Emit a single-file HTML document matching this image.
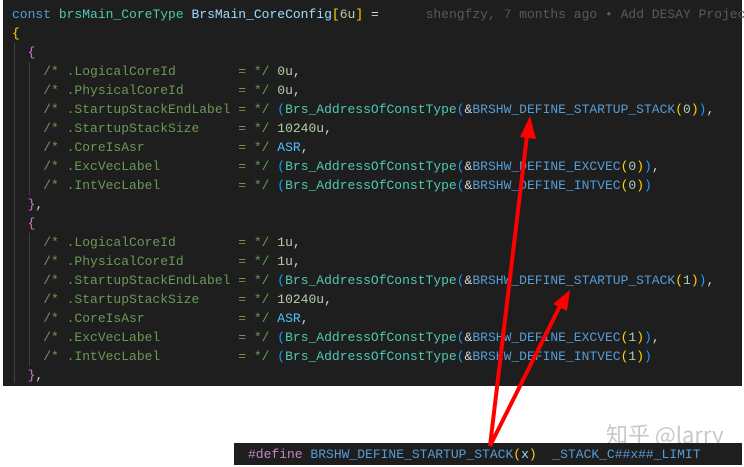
<!DOCTYPE html>
<html><head><meta charset="utf-8"><style>
body{margin:0;width:744px;height:467px;background:#fff;position:relative;overflow:hidden}
#ed{position:absolute;left:3px;top:0;width:739px;height:386px;background:#1e1e1e}
pre{margin:0;font-family:"Liberation Mono",monospace;font-size:13px;line-height:19px;color:#d4d4d4;white-space:pre}
#code{position:absolute;left:9px;top:5px}
.k{color:#569cd6}.t{color:#4ec9b0}.v{color:#9cdcfe}.c{color:#6a9955}.n{color:#b5cea8}.g{color:#ffd700}.p{color:#da70d6}.b{color:#179fff}.m{color:#569cd6}.e{color:#4fc1ff}.bl{color:#5a5a5a}.d{color:#c586c0}
.guide{position:absolute;width:1px;background:#404040}
#bar{position:absolute;left:234px;top:443px;width:508px;height:22px;background:#1e1e1e}
#bar pre{position:absolute;left:14px;top:2px}
#wm{position:absolute;left:606px;top:418px;font-family:"Noto Sans CJK SC",sans-serif;font-size:22px;color:#c8c8c8}
</style></head><body>
<div id="ed">
<div class="guide" style="left:11px;top:43px;height:340px"></div>
<div class="guide" style="left:26px;top:62px;height:133px"></div>
<div class="guide" style="left:26px;top:233px;height:133px"></div>
<pre id="code"><span class="k">const</span> <span class="t">brsMain_CoreType</span> <span class="v">BrsMain_CoreConfig</span><span class="g">[</span><span class="n">6u</span><span class="g">]</span> =      <span class="bl">shengfzy, 7 months ago • Add DESAY Project</span>
<span class="g">{</span>
  <span class="p">{</span>
    <span class="c">/* .LogicalCoreId        = */</span> <span class="n">0u</span>,
    <span class="c">/* .PhysicalCoreId       = */</span> <span class="n">0u</span>,
    <span class="c">/* .StartupStackEndLabel = */</span> <span class="b">(</span><span class="t">Brs_AddressOfConstType</span><span class="b">(</span>&amp;<span class="m">BRSHW_DEFINE_STARTUP_STACK</span><span class="g">(</span><span class="n">0</span><span class="g">)</span><span class="b">)</span>,
    <span class="c">/* .StartupStackSize     = */</span> <span class="n">10240u</span>,
    <span class="c">/* .CoreIsAsr            = */</span> <span class="e">ASR</span>,
    <span class="c">/* .ExcVecLabel          = */</span> <span class="b">(</span><span class="t">Brs_AddressOfConstType</span><span class="b">(</span>&amp;<span class="m">BRSHW_DEFINE_EXCVEC</span><span class="g">(</span><span class="n">0</span><span class="g">)</span><span class="b">)</span>,
    <span class="c">/* .IntVecLabel          = */</span> <span class="b">(</span><span class="t">Brs_AddressOfConstType</span><span class="b">(</span>&amp;<span class="m">BRSHW_DEFINE_INTVEC</span><span class="g">(</span><span class="n">0</span><span class="g">)</span><span class="b">)</span>
  <span class="p">}</span>,
  <span class="p">{</span>
    <span class="c">/* .LogicalCoreId        = */</span> <span class="n">1u</span>,
    <span class="c">/* .PhysicalCoreId       = */</span> <span class="n">1u</span>,
    <span class="c">/* .StartupStackEndLabel = */</span> <span class="b">(</span><span class="t">Brs_AddressOfConstType</span><span class="b">(</span>&amp;<span class="m">BRSHW_DEFINE_STARTUP_STACK</span><span class="g">(</span><span class="n">1</span><span class="g">)</span><span class="b">)</span>,
    <span class="c">/* .StartupStackSize     = */</span> <span class="n">10240u</span>,
    <span class="c">/* .CoreIsAsr            = */</span> <span class="e">ASR</span>,
    <span class="c">/* .ExcVecLabel          = */</span> <span class="b">(</span><span class="t">Brs_AddressOfConstType</span><span class="b">(</span>&amp;<span class="m">BRSHW_DEFINE_EXCVEC</span><span class="g">(</span><span class="n">1</span><span class="g">)</span><span class="b">)</span>,
    <span class="c">/* .IntVecLabel          = */</span> <span class="b">(</span><span class="t">Brs_AddressOfConstType</span><span class="b">(</span>&amp;<span class="m">BRSHW_DEFINE_INTVEC</span><span class="g">(</span><span class="n">1</span><span class="g">)</span><span class="b">)</span>
  <span class="p">}</span>,</pre>
</div>
<div id="wm">知乎 @larry</div>
<div id="bar"><pre><span class="d">#define</span> <span class="m">BRSHW_DEFINE_STARTUP_STACK</span><span class="g">(</span><span class="v">x</span><span class="g">)</span>  <span class="m">_STACK_C##x##_LIMIT</span></pre></div>
<svg width="744" height="467" style="position:absolute;left:0;top:0">
<g stroke="#ff0000" stroke-width="4" fill="none">
<line x1="490" y1="446" x2="527" y2="135"/>
<line x1="490" y1="446" x2="560" y2="306"/>
</g>
<g fill="#ff0000">
<polygon points="530,116 520,137 536,139"/>
<polygon points="570,290 553,304 567,311"/>
</g>
</svg>
</body></html>
